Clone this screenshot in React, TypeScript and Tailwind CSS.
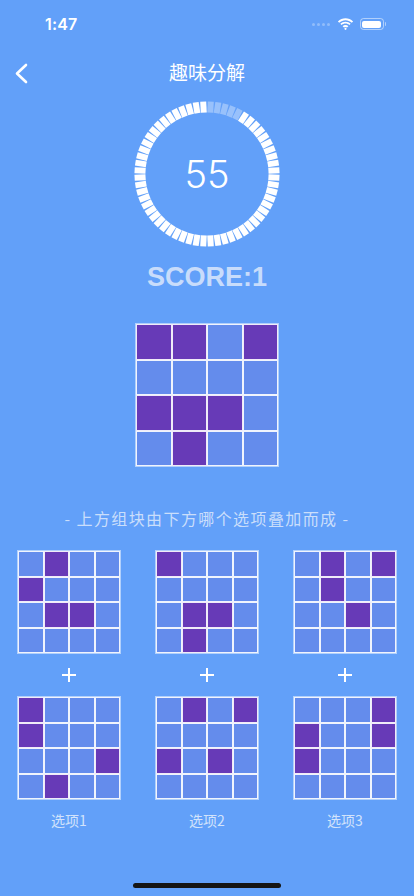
import React from 'react';

const P = 1;
const L = 0;

const target = [
  [P, P, L, P],
  [L, L, L, L],
  [P, P, P, L],
  [L, P, L, L],
];

const options = [
  {
    label: '选项1',
    top: [
      [L, P, L, L],
      [P, L, L, L],
      [L, P, P, L],
      [L, L, L, L],
    ],
    bottom: [
      [P, L, L, L],
      [P, L, L, L],
      [L, L, L, P],
      [L, P, L, L],
    ],
  },
  {
    label: '选项2',
    top: [
      [P, L, L, L],
      [L, L, L, L],
      [L, P, P, L],
      [L, P, L, L],
    ],
    bottom: [
      [L, P, L, P],
      [L, L, L, L],
      [P, L, P, L],
      [L, L, L, L],
    ],
  },
  {
    label: '选项3',
    top: [
      [L, P, L, P],
      [L, P, L, L],
      [L, L, P, L],
      [L, L, L, L],
    ],
    bottom: [
      [L, L, L, P],
      [P, L, L, P],
      [P, L, L, L],
      [L, L, L, L],
    ],
  },
];

function Grid({ cells, big }: { cells: number[][]; big?: boolean }) {
  return (
    <div className="grid grid-cols-4 border border-white/50">
      {cells.flat().map((c, i) => (
        <div
          key={i}
          className={`${big ? 'w-[35.5px] h-[35.5px]' : 'w-[25.5px] h-[25.5px]'} border border-white/90 ${
            c ? 'bg-[#673ab7]' : 'bg-[#648cec]'
          }`}
        />
      ))}
    </div>
  );
}

function Ring({ left }: { left: number }) {
  const ticks = Array.from({ length: 60 }, (_, i) => i);
  return (
    <svg width="146" height="146" viewBox="0 0 146 146">
      {ticks.map((i) => (
        <rect
          key={i}
          x={70}
          y={0.5}
          width={6}
          height={11}
          fill="#ffffff"
          fillOpacity={i < 60 - left ? 0.35 : 1}
          transform={`rotate(${(i + 0.5) * 6} 73 73)`}
        />
      ))}
    </svg>
  );
}

function StatusBar() {
  return (
    <div className="h-[48px] flex items-center justify-between pl-[45px] pr-[28px]">
      <span className="text-white text-[16px] font-semibold font-['Inter',sans-serif] tracking-[0.2px] -mt-[1px]">
        1:47
      </span>
      <div className="flex items-center gap-[6px]">
        <div className="flex gap-[2px] mr-[1px]">
          {[0, 1, 2, 3].map((d) => (
            <span key={d} className="w-[3px] h-[3px] rounded-full bg-white/30" />
          ))}
        </div>
        <svg width="17" height="12" viewBox="0 0 17 12">
          <path d="M8.5 2.2c2.4 0 4.6.9 6.3 2.5l1.3-1.3C14 1.4 11.3.3 8.5.3S3 1.4.9 3.4l1.3 1.3C3.9 3.1 6.1 2.2 8.5 2.2z" fill="#fff" />
          <path d="M8.5 5.6c1.5 0 2.8.5 3.900 1.5l1.3-1.3C12.3 4.5 10.5 3.7 8.5 3.7S4.7 4.5 3.3 5.8l1.3 1.3c1.1-1 2.4-1.5 3.9-1.5z" fill="#fff" />
          <path d="M8.5 9c.6 0 1.1.2 1.5.6l1.4-1.4c-.8-.7-1.8-1.1-2.9-1.1s-2.1.4-2.9 1.1L7 9.6c.4-.4.9-.6 1.5-.6z" fill="#fff" />
          <circle cx="8.5" cy="10.8" r="1.1" fill="#fff" />
        </svg>
        <div className="flex items-center">
          <div className="w-[24px] h-[12px] rounded-[3.5px] border border-white/50 p-[1.5px]">
            <div className="w-full h-full rounded-[2px] bg-white" />
          </div>
          <div className="w-[1.5px] h-[4px] rounded-r-sm bg-white/50 ml-[1px]" />
        </div>
      </div>
    </div>
  );
}

export default function App() {
  return (
    <div className="w-[414px] h-[896px] bg-[#62a0f9] flex flex-col items-center font-['Noto_Sans_CJK_SC',sans-serif] overflow-hidden">
      <div className="w-full">
        <StatusBar />
      </div>

      <div className="w-full h-[50px] relative flex items-center justify-center">
        <svg className="absolute left-[12px] top-[14px]" width="20" height="22" viewBox="0 0 20 22">
          <polyline points="14,3 5,11.5 14,20" fill="none" stroke="#fff" strokeWidth="2.6" strokeLinecap="round" strokeLinejoin="round" />
        </svg>
        <span className="text-white text-[19px] leading-none -mt-[3px]">趣味分解</span>
      </div>

      <div className="relative w-[146px] h-[146px] mt-[3px]">
        <Ring left={55} />
        <div className="absolute inset-0 flex items-center justify-center">
          <span className="text-white text-[38px] font-light font-['Inter',sans-serif] leading-none">55</span>
        </div>
      </div>

      <div className="mt-[15px] text-[#c8dcfb] text-[27px] font-bold font-['Liberation_Sans',sans-serif] leading-[30px]">
        SCORE:1
      </div>

      <div className="mt-[31px]">
        <Grid cells={target} big />
      </div>

      <div className="mt-[40px] text-[#cadefb] text-[16px] leading-[22px] tracking-[1.4px]">
        - 上方组块由下方哪个选项叠加而成 -
      </div>

      <div className="mt-[21px] flex gap-[34px]">
        {options.map((o) => (
          <div key={o.label} className="flex flex-col items-center">
            <Grid cells={o.top} />
            <svg className="my-[13px]" width="16" height="16" viewBox="0 0 16 16">
              <path d="M8 1v14M1 8h14" stroke="#fff" strokeWidth="2" />
            </svg>
            <Grid cells={o.bottom} />
            <span className="mt-[10px] text-[#d2e3fb] text-[14px] leading-[20px]">{o.label}</span>
          </div>
        ))}
      </div>

      <div className="mt-auto mb-[8px] w-[148px] h-[5px] rounded-full bg-[#151515]" />
    </div>
  );
}
